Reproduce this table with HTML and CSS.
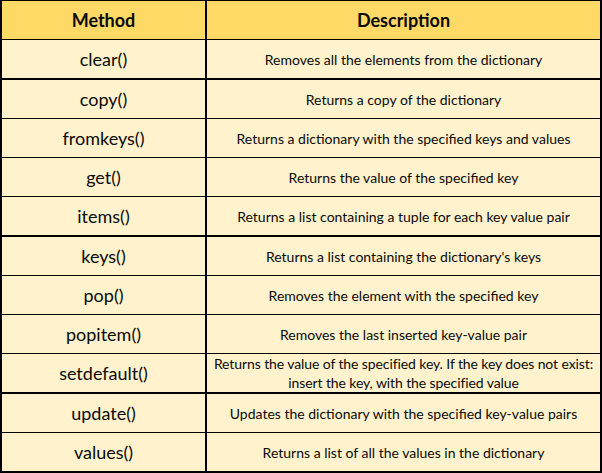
FILE: index.html
```html
<!DOCTYPE html>
<html>
<head>
<meta charset="utf-8">
<link rel="stylesheet" href="styles.css">
</head>
<body>
<div class="table">
  <div class="row head">
    <div class="cell method">Method</div>
    <div class="cell desc">Description</div>
  </div>
  <div class="row thick">
    <div class="cell method">clear()</div>
    <div class="cell desc">Removes all the elements from the dictionary</div>
  </div>
  <div class="row">
    <div class="cell method">copy()</div>
    <div class="cell desc">Returns a copy of the dictionary</div>
  </div>
  <div class="row">
    <div class="cell method">fromkeys()</div>
    <div class="cell desc">Returns a dictionary with the specified keys and values</div>
  </div>
  <div class="row">
    <div class="cell method">get()</div>
    <div class="cell desc">Returns the value of the specified key</div>
  </div>
  <div class="row thick">
    <div class="cell method">items()</div>
    <div class="cell desc">Returns a list containing a tuple for each key value pair</div>
  </div>
  <div class="row">
    <div class="cell method">keys()</div>
    <div class="cell desc">Returns a list containing the dictionary's keys</div>
  </div>
  <div class="row">
    <div class="cell method">pop()</div>
    <div class="cell desc">Removes the element with the specified key</div>
  </div>
  <div class="row">
    <div class="cell method">popitem()</div>
    <div class="cell desc">Removes the last inserted key-value pair</div>
  </div>
  <div class="row thick">
    <div class="cell method">setdefault()</div>
    <div class="cell desc two">Returns the value of the specified key. If the key does not exist:<br>insert the key, with the specified value</div>
  </div>
  <div class="row">
    <div class="cell method">update()</div>
    <div class="cell desc">Updates the dictionary with the specified key-value pairs</div>
  </div>
  <div class="row thick last">
    <div class="cell method">values()</div>
    <div class="cell desc">Returns a list of all the values in the dictionary</div>
  </div>
</div>
</body>
</html>
```

FILE: styles.css
```css
html, body {
  margin: 0;
  padding: 0;
  background: #ffffff;
}
body {
  font-family: Lato, "Liberation Sans", sans-serif;
  color: #0a0a0a;
}
.table {
  border-top: 1px solid #000;
  border-left: 2px solid #000;
  border-right: 2px solid #000;
  box-sizing: border-box;
  width: 602px;
  background: #fff2cc;
}
.row {
  display: grid;
  grid-template-columns: 205px 1fr;
  height: 39px;
  border-bottom: 1px solid #000;
  box-sizing: border-box;
}
.row.head {
  background: #ffd966;
}
.row.thick {
  height: 40px;
  border-bottom-width: 2px;
}
.cell {
  display: flex;
  align-items: center;
  justify-content: center;
  text-align: center;
  white-space: nowrap;
}
.method {
  border-right: 2px solid #000;
  font-size: 18px;
}
.desc {
  font-size: 14px;
}
.head .cell {
  font-weight: bold;
  font-size: 18px;
}
.desc.two {
  line-height: 19px;
  letter-spacing: -0.1px;
}
```
